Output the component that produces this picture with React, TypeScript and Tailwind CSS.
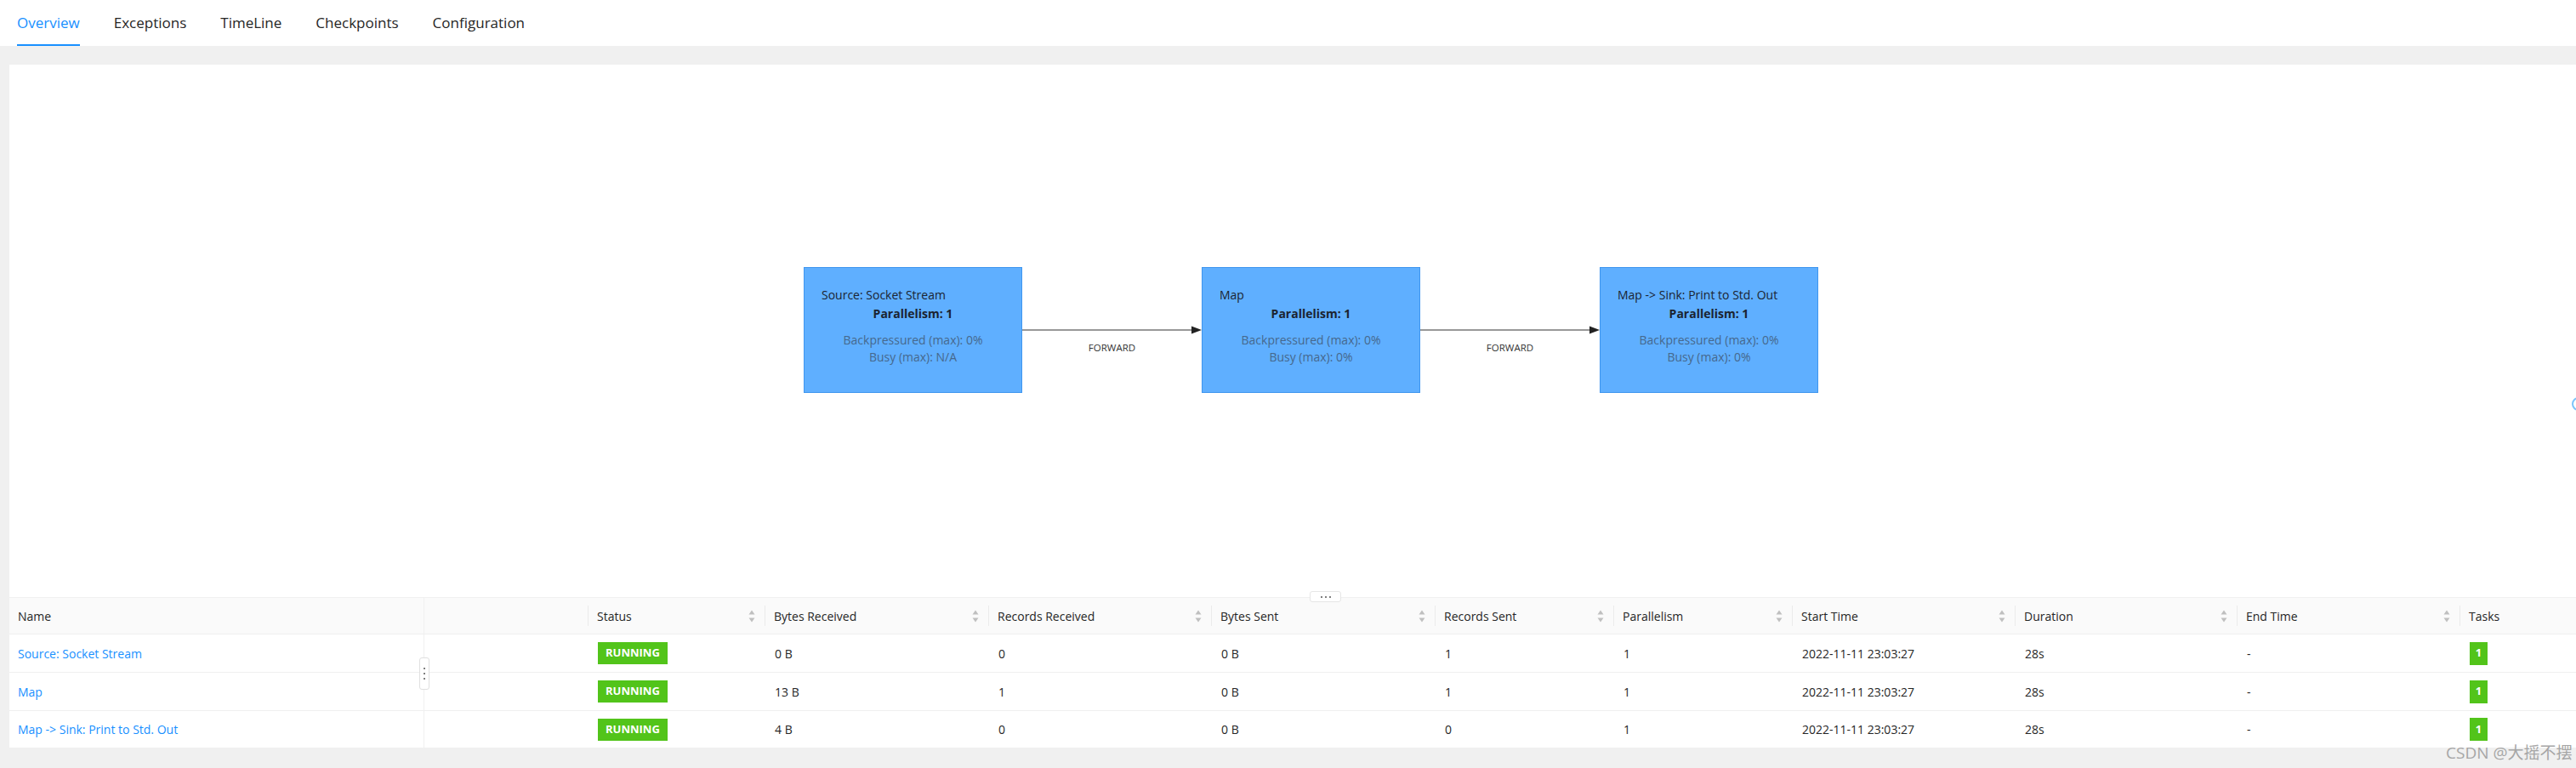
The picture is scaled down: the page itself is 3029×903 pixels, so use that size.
import React from "react";

const FONT = { fontFamily: '"Open Sans", "Noto Sans", "Noto Sans CJK SC", sans-serif' };

type Col = { label: string; w?: number; sort: boolean; sep: boolean };

const cols: Col[] = [
  { label: "Name", w: 488, sort: false, sep: false },
  { label: "", w: 193, sort: false, sep: true },
  { label: "Status", w: 208, sort: true, sep: true },
  { label: "Bytes Received", w: 263, sort: true, sep: true },
  { label: "Records Received", w: 262, sort: true, sep: true },
  { label: "Bytes Sent", w: 263, sort: true, sep: true },
  { label: "Records Sent", w: 210, sort: true, sep: true },
  { label: "Parallelism", w: 210, sort: true, sep: true },
  { label: "Start Time", w: 262, sort: true, sep: true },
  { label: "Duration", w: 261, sort: true, sep: true },
  { label: "End Time", w: 262, sort: true, sep: true },
  { label: "Tasks", sort: false, sep: false },
];

const rows = [
  ["Source: Socket Stream", "", "RUNNING", "0 B", "0", "0 B", "1", "1", "2022-11-11 23:03:27", "28s", "-", "1"],
  ["Map", "", "RUNNING", "13 B", "1", "0 B", "1", "1", "2022-11-11 23:03:27", "28s", "-", "1"],
  ["Map -> Sink: Print to Std. Out", "", "RUNNING", "4 B", "0", "0 B", "0", "1", "2022-11-11 23:03:27", "28s", "-", "1"],
];

const rowHeights = ["h-[45px]", "h-[45px]", "h-[44px]"];

function SortIcon() {
  return (
    <svg width="8" height="15" viewBox="0 0 8 15" className="shrink-0">
      <path d="M4 0.5 L7.5 5.5 H0.5 Z" fill="#bfbfbf" />
      <path d="M0.5 9.5 H7.5 L4 14.5 Z" fill="#bfbfbf" />
    </svg>
  );
}

function Node({ left, title, b, busy }: { left: number; title: string; b: string; busy: string }) {
  return (
    <div
      className="absolute top-[238px] w-[257px] h-[148px] bg-[#5fafff] border border-[#3f96ef] flex flex-col pt-[21px]"
      style={{ left }}
    >
      <div className="pl-[20px] text-[14px] leading-[22px] text-[#1b2430]">{title}</div>
      <div className="text-center text-[14px] leading-[22px] font-bold text-[#1b2430]">Parallelism: 1</div>
      <div className="mt-[10px] text-center text-[14px] leading-[20px] text-[#46688c]">Backpressured (max): {b}</div>
      <div className="text-center text-[14px] leading-[20px] text-[#46688c]">Busy (max): {busy}</div>
    </div>
  );
}

function Edge({ x1, x2 }: { x1: number; x2: number }) {
  const y = 312;
  const cx = (x1 + x2) / 2;
  return (
    <g>
      <line x1={x1} y1={y} x2={x2 - 11} y2={y} stroke="#333" strokeWidth="1" />
      <path d={`M${x2 - 12} ${y - 4.5} L${x2} ${y} L${x2 - 12} ${y + 4.5} Z`} fill="#222" />
      <text x={cx} y={y + 25} textAnchor="middle" fontSize="11.5" fill="#333" style={FONT}>
        FORWARD
      </text>
    </g>
  );
}

export default function App() {
  const tabs = ["Overview", "Exceptions", "TimeLine", "Checkpoints", "Configuration"];
  return (
    <div className="relative w-[3029px] h-[903px] overflow-hidden bg-[#f0f0f0]" style={FONT}>
      {/* Tabs */}
      <div className="h-[54px] bg-white flex items-stretch pl-[20px] gap-[40px]">
        {tabs.map((t, i) => (
          <div
            key={t}
            className={
              i === 0
                ? "flex items-center text-[17px] text-[#1890ff] border-b-2 border-[#1890ff] pt-[2px]"
                : "flex items-center text-[17px] text-[#262626] border-b-2 border-transparent pt-[2px]"
            }
          >
            {t}
          </div>
        ))}
      </div>

      {/* Content */}
      <div className="pl-[11px] pt-[22px]">
        <div className="bg-white h-[804px] flex flex-col">
          {/* Graph */}
          <div className="relative h-[626px] shrink-0">
            <svg className="absolute inset-0 pointer-events-none" width="3018" height="626">
              <Edge x1={1191} x2={1402} />
              <Edge x1={1659} x2={1870} />
            </svg>
            <Node left={934} title="Source: Socket Stream" b="0%" busy="N/A" />
            <Node left={1402} title="Map" b="0%" busy="0%" />
            <Node left={1870} title="Map -> Sink: Print to Std. Out" b="0%" busy="0%" />
            <div className="absolute left-[3013px] top-[391px] w-[16px] h-[16px] rounded-full border-2 border-[#7cc4fa]" />
            <div className="absolute left-[1529px] top-[619px] w-[37px] h-[13px] rounded-[3px] bg-white border border-[#e6e6e6] flex items-center justify-center gap-[3px] z-10">
              <span className="w-[2px] h-[2px] rounded-full bg-[#555]" />
              <span className="w-[2px] h-[2px] rounded-full bg-[#555]" />
              <span className="w-[2px] h-[2px] rounded-full bg-[#555]" />
            </div>
          </div>

          {/* Table */}
          <div className="relative flex flex-col">
            <div className="flex h-[44px] bg-[#fafafa] border-t border-b border-[#f0f0f0]">
              {cols.map((c, i) => (
                <div
                  key={i}
                  className={
                    (c.w ? "shrink-0 " : "flex-1 ") +
                    "relative flex items-center justify-between pl-[10px] pr-[12px] text-[14px] text-[#262626]" +
                    (i === 0 ? " border-r border-[#f0f0f0]" : "")
                  }
                  style={c.w ? { width: c.w } : undefined}
                >
                  <span>{c.label}</span>
                  {c.sort && <SortIcon />}
                  {c.sep && (
                    <span className="absolute right-0 top-1/2 -translate-y-1/2 w-px h-[24px] bg-[#ebebeb]" />
                  )}
                </div>
              ))}
            </div>
            {rows.map((r, ri) => (
              <div key={ri} className={"flex border-b border-[#f0f0f0] " + rowHeights[ri]}>
                {r.map((v, ci) => {
                  const c = cols[ci];
                  let content: React.ReactNode = v;
                  if (ci === 0) content = <span className="text-[#1890ff]">{v}</span>;
                  if (ci === 2)
                    content = (
                      <span className="h-[26px] px-[9px] flex items-center bg-[#52c41a] text-white font-bold text-[13px]">
                        {v}
                      </span>
                    );
                  if (ci === 11)
                    content = (
                      <span className="h-[27px] w-[21px] flex items-center justify-center bg-[#52c41a] text-white font-bold text-[13px]">
                        {v}
                      </span>
                    );
                  return (
                    <div
                      key={ci}
                      className={
                        (c.w ? "shrink-0 " : "flex-1 ") +
                        "flex items-center text-[14px] text-[#262626]" +
                        (ci === 0 ? " border-r border-[#f0f0f0] pl-[10px]" : "") +
                        (ci === 1 ? " pl-[10px]" : "") +
                        (ci >= 2 ? " pl-[11px]" : "")
                      }
                      style={c.w ? { width: c.w } : undefined}
                    >
                      {content}
                    </div>
                  );
                })}
              </div>
            ))}
            {/* resize handle */}
            <div className="absolute left-[482px] top-[71px] w-[12px] h-[38px] rounded-[3px] bg-white border border-[#e0e0e0] flex flex-col items-center justify-center gap-[4px]">
              <span className="w-[2px] h-[2px] rounded-full bg-[#555]" />
              <span className="w-[2px] h-[2px] rounded-full bg-[#555]" />
              <span className="w-[2px] h-[2px] rounded-full bg-[#555]" />
            </div>
          </div>
        </div>
      </div>

      {/* watermark */}
      <div className="absolute left-[2876px] top-[872px] text-[19px] leading-[26px] text-[#a6a6a6] whitespace-nowrap">
        CSDN @大摇不摆
      </div>
    </div>
  );
}
